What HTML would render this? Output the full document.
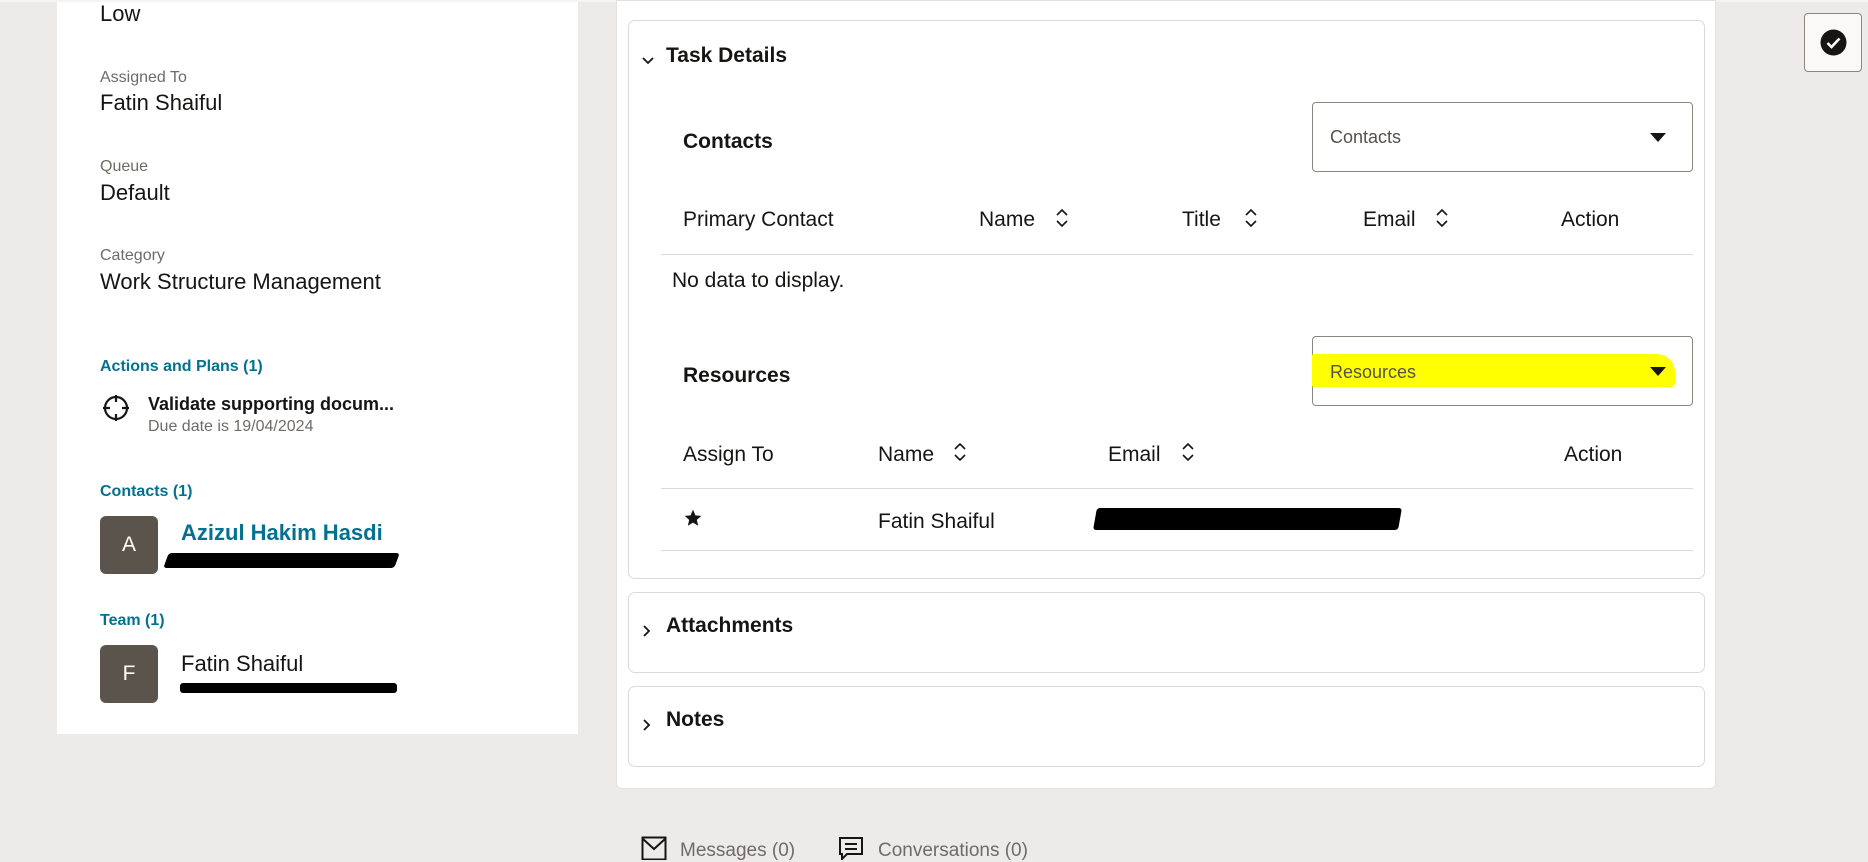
<!DOCTYPE html>
<html><head><meta charset="utf-8"><style>
*{margin:0;padding:0;box-sizing:border-box}
body{width:1868px;height:860px;overflow:hidden;background:#ecebea;font-family:"Liberation Sans",sans-serif;color:#161513;position:relative}
.a{position:absolute;white-space:nowrap}
.lbl{font-size:16px;color:#6f6b66}
.val{font-size:22px}
.teal{color:#04718f;font-size:16px;font-weight:bold}
.card{position:absolute;background:#fff;border:1px solid #dcdad6;border-radius:7px}
.h{font-size:21px;font-weight:bold}
.th{font-size:21px}
.line{position:absolute;height:1px;background:#dcdad6}
.sel{position:absolute;border:1px solid #8a8680;border-radius:4px;background:#fff}
.tri{position:absolute;width:0;height:0;border-left:8px solid transparent;border-right:8px solid transparent;border-top:9px solid #161513}
.av{position:absolute;width:58px;height:58px;background:#5b544d;border-radius:6px;color:#fff;font-size:21px;text-align:center;line-height:58px}
.red{position:absolute;background:#000;border-radius:3px}
</style></head><body>
<div class="a" style="left:0;top:0;width:1868px;height:2px;background:#f4f4f3"></div>
<div class="a" style="left:57px;top:2px;width:521px;height:732px;background:#fff"></div>
<div class="a val" style="left:100px;top:1px">Low</div>
<div class="a lbl" style="left:100px;top:69px">Assigned To</div>
<div class="a val" style="left:100px;top:90px">Fatin Shaiful</div>
<div class="a lbl" style="left:100px;top:158px">Queue</div>
<div class="a val" style="left:100px;top:180px">Default</div>
<div class="a lbl" style="left:100px;top:247px">Category</div>
<div class="a val" style="left:100px;top:269px">Work Structure Management</div>
<div class="a teal" style="left:100px;top:358px">Actions and Plans (1)</div>
<svg class="a" style="left:102px;top:394px" width="28" height="28" viewBox="0 0 28 28"><circle cx="14" cy="14" r="11" fill="none" stroke="#161513" stroke-width="2.2"/><path d="M14 1v7M14 20v7M1 14h7M20 14h7" stroke="#161513" stroke-width="2.2"/></svg>
<div class="a" style="left:148px;top:394px;font-size:18px;font-weight:bold;color:#161513">Validate supporting docum...</div>
<div class="a" style="left:148px;top:418px;font-size:16px;color:#6f6b66">Due date is 19/04/2024</div>
<div class="a teal" style="left:100px;top:483px">Contacts (1)</div>
<div class="av" style="left:100px;top:516px">A</div>
<div class="a" style="left:181px;top:520px;font-size:22px;font-weight:bold;color:#04718f">Azizul Hakim Hasdi</div>
<div class="red" style="left:166px;top:553px;width:231px;height:15px;transform:skewX(-20deg)"></div>
<div class="a teal" style="left:100px;top:612px">Team (1)</div>
<div class="av" style="left:100px;top:645px">F</div>
<div class="a val" style="left:181px;top:651px">Fatin Shaiful</div>
<div class="red" style="left:180px;top:683px;width:217px;height:10px"></div>
<div class="a" style="left:616px;top:0;width:1100px;height:789px;background:#fff;border:1px solid #e4e2df;border-radius:0 0 6px 6px"></div>
<div class="card" style="left:628px;top:20px;width:1077px;height:559px"></div>
<svg class="a" style="left:641px;top:56px" width="14" height="10"><path d="M2 2l5 5 5-5" fill="none" stroke="#161513" stroke-width="1.8"/></svg>
<div class="a h" style="left:666px;top:44px">Task Details</div>
<div class="a h" style="left:683px;top:130px">Contacts</div>
<div class="sel" style="left:1312px;top:102px;width:381px;height:70px"></div>
<div class="a" style="left:1330px;top:127px;font-size:18px;color:#55514c">Contacts</div>
<div class="tri" style="left:1650px;top:133px"></div>
<div class="a th" style="left:683px;top:208px">Primary Contact</div>
<div class="a th" style="left:979px;top:208px">Name</div>
<div class="a th" style="left:1182px;top:208px">Title</div>
<div class="a th" style="left:1363px;top:208px">Email</div>
<div class="a th" style="left:1561px;top:208px">Action</div>
<svg class="a" style="left:1055px;top:207px" width="14" height="22"><path d="M2 8l5-5 5 5M2 14l5 5 5-5" fill="none" stroke="#161513" stroke-width="1.6"/></svg>
<svg class="a" style="left:1244px;top:207px" width="14" height="22"><path d="M2 8l5-5 5 5M2 14l5 5 5-5" fill="none" stroke="#161513" stroke-width="1.6"/></svg>
<svg class="a" style="left:1435px;top:207px" width="14" height="22"><path d="M2 8l5-5 5 5M2 14l5 5 5-5" fill="none" stroke="#161513" stroke-width="1.6"/></svg>
<div class="line" style="left:661px;top:254px;width:1032px"></div>
<div class="a th" style="left:672px;top:269px">No data to display.</div>
<div class="a h" style="left:683px;top:364px">Resources</div>
<div class="sel" style="left:1312px;top:336px;width:381px;height:70px"></div>
<div class="a" style="left:1312px;top:354px;width:363px;height:33px;background:#ffff00;border-radius:2px 18px 4px 2px"></div>
<div class="a" style="left:1330px;top:362px;font-size:18px;color:#55514c">Resources</div>
<div class="tri" style="left:1650px;top:367px"></div>
<div class="a th" style="left:683px;top:443px">Assign To</div>
<div class="a th" style="left:878px;top:443px">Name</div>
<div class="a th" style="left:1108px;top:443px">Email</div>
<div class="a th" style="left:1564px;top:443px">Action</div>
<svg class="a" style="left:953px;top:441px" width="14" height="22"><path d="M2 8l5-5 5 5M2 14l5 5 5-5" fill="none" stroke="#161513" stroke-width="1.6"/></svg>
<svg class="a" style="left:1181px;top:441px" width="14" height="22"><path d="M2 8l5-5 5 5M2 14l5 5 5-5" fill="none" stroke="#161513" stroke-width="1.6"/></svg>
<div class="line" style="left:661px;top:488px;width:1032px"></div>
<svg class="a" style="left:683px;top:508px" width="20" height="20" viewBox="0 0 24 24"><path d="M12 2l2.9 6.9 7.1.6-5.4 4.7 1.6 7.1L12 17.5 5.8 21.3l1.6-7.1L2 9.5l7.1-.6z" fill="#161513"/></svg>
<div class="a th" style="left:878px;top:510px">Fatin Shaiful</div>
<div class="red" style="left:1095px;top:508px;width:305px;height:22px;transform:skewX(-10deg)"></div>
<div class="line" style="left:661px;top:550px;width:1032px"></div>
<div class="card" style="left:628px;top:592px;width:1077px;height:81px"></div>
<svg class="a" style="left:642px;top:624px" width="10" height="14"><path d="M2 2l5 5-5 5" fill="none" stroke="#161513" stroke-width="1.8"/></svg>
<div class="a h" style="left:666px;top:614px">Attachments</div>
<div class="card" style="left:628px;top:686px;width:1077px;height:81px"></div>
<svg class="a" style="left:642px;top:718px" width="10" height="14"><path d="M2 2l5 5-5 5" fill="none" stroke="#161513" stroke-width="1.8"/></svg>
<div class="a h" style="left:666px;top:708px">Notes</div>
<svg class="a" style="left:641px;top:836px" width="26" height="24"><rect x="1.5" y="1.5" width="23" height="22" fill="none" stroke="#161513" stroke-width="2"/><path d="M2 3l11 10 11-10" fill="none" stroke="#161513" stroke-width="2"/></svg>
<div class="a" style="left:680px;top:840px;font-size:19px;color:#6f6b66">Messages (0)</div>
<svg class="a" style="left:838px;top:836px" width="26" height="24"><path d="M2 2h22v16H9l-5 5v-5H2z" fill="none" stroke="#161513" stroke-width="2"/><path d="M7 8h12M7 13h12" stroke="#161513" stroke-width="2"/></svg>
<div class="a" style="left:878px;top:840px;font-size:19px;color:#6f6b66">Conversations (0)</div>
<div class="a" style="left:1804px;top:13px;width:58px;height:59px;background:#faf9f8;border:1px solid #8a8680;border-radius:4px"></div>
<svg class="a" style="left:1820px;top:29px" width="27" height="27" viewBox="0 0 27 27"><circle cx="13.5" cy="13.5" r="13" fill="#161513"/><path d="M7.5 14l4 4 8-8.5" fill="none" stroke="#fff" stroke-width="2.6"/></svg>
</body></html>
